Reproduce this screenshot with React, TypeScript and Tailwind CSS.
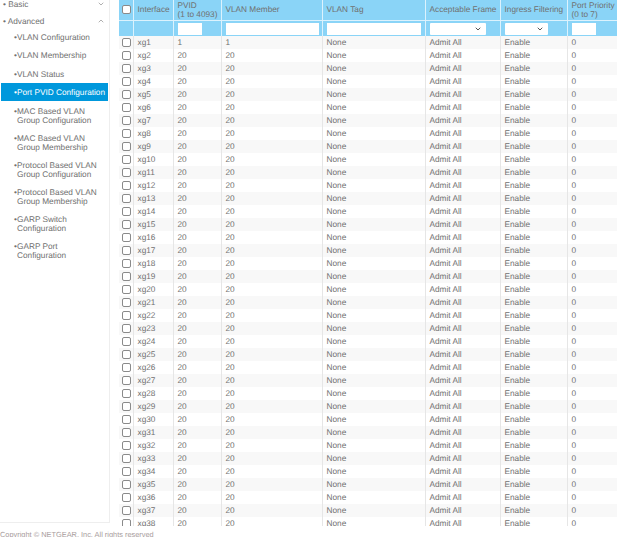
import React from "react";
import { ChevronDown, ChevronUp } from "lucide-react";

const ports = Array.from({ length: 38 }, (_, i) => i + 1);

const menu = [
  { lines: ["VLAN Configuration"], h: "h-[17px]" },
  { lines: ["VLAN Membership"], h: "h-[19px]" },
  { lines: ["VLAN Status"], h: "h-[18px]" },
  { lines: ["Port PVID Configuration"], h: "h-[18px]", active: true },
  { lines: ["MAC Based VLAN", "Group Configuration"], h: "mt-[1px] h-[27px]" },
  { lines: ["MAC Based VLAN", "Group Membership"], h: "h-[27px]" },
  { lines: ["Protocol Based VLAN", "Group Configuration"], h: "h-[27px]" },
  { lines: ["Protocol Based VLAN", "Group Membership"], h: "h-[27px]" },
  { lines: ["GARP Switch", "Configuration"], h: "h-[27px]" },
  { lines: ["GARP Port", "Configuration"], h: "h-[27px]" },
];

const Box = () => (
  <span className="block h-[9px] w-[9px] rounded-[2px] border border-[#8a8a8a] bg-white" />
);

const Dropdown = ({ width }: { width: string }) => (
  <span className={`flex h-[12px] items-center justify-end rounded-[1px] bg-white pr-1 ${width}`}>
    <ChevronDown size={8} strokeWidth={3} className="text-[#555]" />
  </span>
);

const App = () => {
  return (
    <div className="relative h-[537px] w-[623px] overflow-hidden bg-white font-['Liberation_Sans',Arial,sans-serif] text-[8.25px] leading-[9px] text-[#707070] [text-rendering:geometricPrecision]">
      <div className="flex h-[526px] items-start">
        {/* Sidebar */}
        <aside className="h-[523px] w-[110px] shrink-0 border-r border-b border-[#eeeeee]">
          <div className="flex h-[8px] items-center justify-between pl-[3px] pr-[4px]">
            <span>• Basic</span>
            <ChevronDown size={8} className="text-[#888]" />
          </div>
          <div className="mt-[5px] flex h-[16px] items-center justify-between pl-[3px] pr-[4px]">
            <span>• Advanced</span>
            <ChevronUp size={8} className="text-[#888]" />
          </div>
          <ul>
            {menu.map((item) => (
              <li
                key={item.lines.join(" ")}
                className={`ml-[1px] mr-[1px] flex items-center whitespace-nowrap pl-[13px] ${item.h} ${
                  item.active ? "bg-[#0098dc] text-white" : ""
                }`}
              >
                <span className="w-[3px] self-center">
                  <span className={`block ${item.lines.length > 1 ? "-mt-[9px]" : ""}`}>•</span>
                </span>
                <span>
                  {item.lines.map((line) => (
                    <span key={line} className="block">
                      {line}
                    </span>
                  ))}
                </span>
              </li>
            ))}
          </ul>
        </aside>

        {/* Port table */}
        <div className="ml-[9px] h-[526px] w-[498px] overflow-hidden">
          <table className="w-[498px] table-fixed border-collapse whitespace-nowrap">
            <colgroup>
              <col className="w-[14px]" />
              <col className="w-[40px]" />
              <col className="w-[48px]" />
              <col className="w-[101px]" />
              <col className="w-[103px]" />
              <col className="w-[75px]" />
              <col className="w-[67px]" />
              <col className="w-[50px]" />
            </colgroup>
            <thead>
              <tr className="h-[20px] bg-[#8ad4f7] text-left">
                <th className="border-r border-white/70 pl-[3px] font-normal"><Box /></th>
                <th className="border-r border-white/70 pl-[4px] font-normal">Interface</th>
                <th className="border-r border-white/70 pl-[4px] font-normal">PVID<br />(1 to 4093)</th>
                <th className="border-r border-white/70 pl-[4px] font-normal">VLAN Member</th>
                <th className="border-r border-white/70 pl-[4px] font-normal">VLAN Tag</th>
                <th className="border-r border-white/70 pl-[4px] font-normal">Acceptable Frame</th>
                <th className="border-r border-white/70 pl-[4px] font-normal">Ingress Filtering</th>
                <th className="pl-[4px] font-normal">Port Priority<br />(0 to 7)</th>
              </tr>
              <tr className="h-[16px] border-t border-white/70 bg-[#8ad4f7]">
                <th className="border-r border-white/70" />
                <th className="border-r border-white/70" />
                <th className="border-r border-white/70 pl-[4px] pt-[2px]"><span className="block h-[12px] w-[24px] bg-white" /></th>
                <th className="border-r border-white/70 pl-[4px] pt-[2px]"><span className="block h-[12px] w-[93px] bg-white" /></th>
                <th className="border-r border-white/70 pl-[4px] pt-[2px]"><span className="block h-[12px] w-[94px] bg-white" /></th>
                <th className="border-r border-white/70 pl-[4px] pt-[2px]"><Dropdown width="w-[56px]" /></th>
                <th className="border-r border-white/70 pl-[4px] pt-[2px]"><Dropdown width="w-[43px]" /></th>
                <th className="pl-[4px] pt-[2px]"><span className="block h-[12px] w-[24px] bg-white" /></th>
              </tr>
            </thead>
            <tbody>
              {ports.map((n) => (
                <tr key={n} className={`h-[13px] ${n % 2 === 1 ? "bg-[#f8f8f8]" : "bg-white"}`}>
                  <td className="border-r border-[#e6e6e6] pl-[3px]"><Box /></td>
                  <td className="border-r border-[#e6e6e6] pl-[4px]">xg{n}</td>
                  <td className="border-r border-[#e6e6e6] pl-[4px]">{n === 1 ? 1 : 20}</td>
                  <td className="border-r border-[#e6e6e6] pl-[4px]">{n === 1 ? 1 : 20}</td>
                  <td className="border-r border-[#e6e6e6] pl-[4px]">None</td>
                  <td className="border-r border-[#e6e6e6] pl-[4px]">Admit All</td>
                  <td className="border-r border-[#e6e6e6] pl-[4px]">Enable</td>
                  <td className="pl-[4px]">0</td>
                </tr>
              ))}
            </tbody>
          </table>
        </div>
      </div>
      <p className="mt-[4px] whitespace-nowrap text-[7.4px] text-[#a89c9c]">Copyright © NETGEAR, Inc. All rights reserved</p>
    </div>
  );
};

export default App;
